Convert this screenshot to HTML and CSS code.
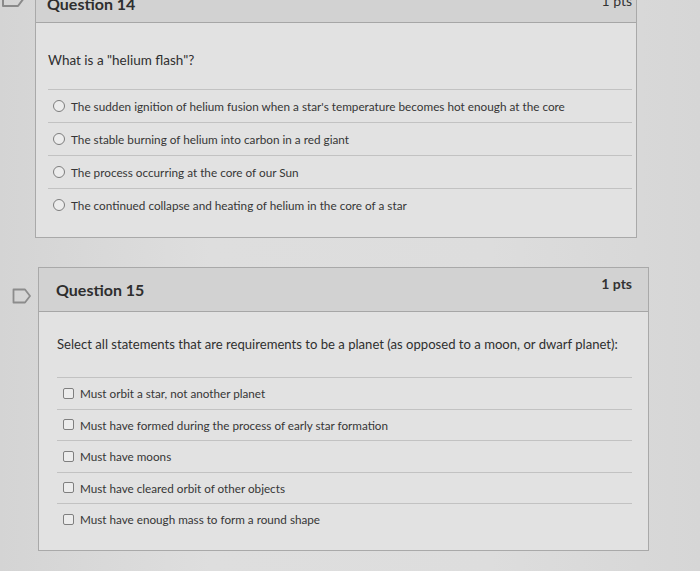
FILE: index.html
```html
<!DOCTYPE html>
<html>
<head>
<meta charset="utf-8">
<link rel="stylesheet" href="styles.css">
</head>
<body>
<div class="page">
  <div class="question q14">
    <div class="flag flag-top">
      <svg width="26" height="18" viewBox="0 0 26 18"><path d="M2 1 H17 L23 9 L17 17 H2 Z" fill="none" stroke="#8a8a8a" stroke-width="2" stroke-linejoin="round"/></svg>
    </div>
    <div class="q-header">
      <span class="q-title">Question 14</span>
      <span class="q-pts">1 pts</span>
    </div>
    <div class="q-body">
      <p class="q-text">What is a "helium flash"?</p>
      <ul class="answers">
        <li class="answer"><span class="radio"></span>The sudden ignition of helium fusion when a star's temperature becomes hot enough at the core</li>
        <li class="answer"><span class="radio"></span>The stable burning of helium into carbon in a red giant</li>
        <li class="answer"><span class="radio"></span>The process occurring at the core of our Sun</li>
        <li class="answer"><span class="radio"></span>The continued collapse and heating of helium in the core of a star</li>
      </ul>
    </div>
  </div>

  <div class="question q15">
    <div class="flag flag-side">
      <svg width="20" height="16" viewBox="0 0 20 16"><path d="M1.5 1.5 H13 L18 8 L13 14.5 H1.5 Z" fill="none" stroke="#8c8c8c" stroke-width="1.8" stroke-linejoin="round"/></svg>
    </div>
    <div class="q-header">
      <span class="q-title">Question 15</span>
      <span class="q-pts">1 pts</span>
    </div>
    <div class="q-body">
      <p class="q-text">Select all statements that are requirements to be a planet (as opposed to a moon, or dwarf planet):</p>
      <ul class="answers">
        <li class="answer"><span class="check"></span>Must orbit a star, not another planet</li>
        <li class="answer"><span class="check"></span>Must have formed during the process of early star formation</li>
        <li class="answer"><span class="check"></span>Must have moons</li>
        <li class="answer"><span class="check"></span>Must have cleared orbit of other objects</li>
        <li class="answer"><span class="check"></span>Must have enough mass to form a round shape</li>
      </ul>
    </div>
  </div>
</div>
</body>
</html>
```

FILE: styles.css
```css
* { box-sizing: border-box; }
html, body {
  margin: 0;
  padding: 0;
  width: 700px;
  height: 571px;
  overflow: hidden;
  background: #dcdcdc;
  font-family: Lato, "Open Sans", sans-serif;
  color: #3a3a3a;
}
.page {
  display: flex;
  flex-direction: column;
  background: linear-gradient(90deg, #d4d4d4 0%, #dedede 30%, #dddddd 70%, #d6d6d6 100%);
  height: 571px;
}
.question {
  position: relative;
  border: 1px solid #a9a9a9;
  background: #e2e2e2;
}
.q14 {
  margin: -22px 0 0 35px;
  width: 602px;
}
.q15 {
  margin: 29px 0 0 38px;
  width: 611px;
}
.flag {
  position: absolute;
}
.flag-top { left: -35px; top: 10px; }
.flag-side { left: -27px; top: 20px; }
.q-header {
  height: 44px;
  display: flex;
  justify-content: space-between;
  align-items: center;
  background: #d2d2d2;
  border-bottom: 1px solid #a6a6a6;
}
.q14 .q-header { padding: 0 4px 0 11px; }
.q15 .q-header { padding: 0 16px 0 17px; }
.q-title {
  font-size: 16px;
  font-weight: 700;
  color: #2e2e2e;
}
.q-pts {
  font-size: 14px;
  font-weight: 700;
  color: #333;
}
.q14 .q-title { margin-top: 5px; }
.q14 .q-pts { margin-top: 0; font-weight: 400; }
.q15 .q-pts { margin-top: -12px; }
.q-text {
  margin: 0;
  font-size: 13.1px;
  color: #2f2f2f;
  white-space: nowrap;
}
.q14 .q-body { padding: 0 4px 0 12px; }
.q14 .q-text { font-size: 13.5px; padding: 29px 0 21px 0; }
.q15 .q-body { padding: 0 16px 0 18px; }
.q15 .q-text { padding: 24px 0 25px 0; }
.answers {
  list-style: none;
  margin: 0;
  padding: 0;
}
.answer {
  display: flex;
  align-items: center;
  border-top: 1px solid #c2c2c2;
  font-size: 11.75px;
  color: #363636;
  white-space: nowrap;
}
.q14 .answer {
  height: 33px;
  padding-left: 5px;
}
.q14 .answers { padding-bottom: 16px; }
.q15 .answer {
  height: 31.5px;
  padding-left: 6px;
  font-size: 11.7px;
}
.q15 .answers { padding-bottom: 15px; }
.radio {
  width: 12px;
  height: 12px;
  border: 1.5px solid #7d7d7d;
  border-radius: 50%;
  margin-right: 6px;
  background: #ececec;
  flex: none;
}
.check {
  width: 11px;
  height: 11px;
  border: 1.5px solid #7f7f7f;
  border-radius: 2px;
  margin-right: 6px;
  background: #ececec;
  flex: none;
}
```
